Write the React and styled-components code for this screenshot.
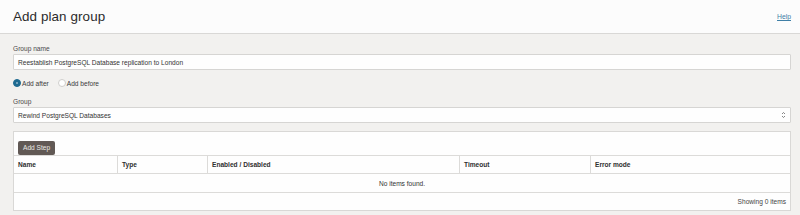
import React from "react";
import styled, { createGlobalStyle } from "styled-components";

const Global = createGlobalStyle`
  html, body { margin: 0; padding: 0; background: #f2f1ef; }
  body { font-family: "Liberation Sans", Arial, sans-serif; color: #333; }
  * { box-sizing: border-box; }
`;

const Page = styled.div`
  width: 800px;
  height: 215px;
  background: #f2f1ef;
  display: flex;
  flex-direction: column;
`;

const Header = styled.header`
  height: 34px;
  background: #fcfcfc;
  border-bottom: 1px solid #d9d8d6;
  display: flex;
  align-items: center;
  justify-content: space-between;
  padding: 0 9px 1px 13px;
`;

const Title = styled.h1`
  margin: 0;
  font-size: 13.4px;
  font-weight: 400;
  color: #2b2b2b;
  letter-spacing: 0.1px;
`;

const HelpLink = styled.a`
  font-size: 6.8px;
  color: #3f7fa6;
  text-decoration: underline;
  margin-top: 1px;
`;

const Body = styled.main`
  padding: 10px 9px 0 13px;
  display: flex;
  flex-direction: column;
`;

const Label = styled.div`
  font-size: 6.6px;
  line-height: 10px;
  color: #4a4a4a;
  margin-top: ${(p) => p.$mt || 0}px;
`;

const Field = styled.div`
  height: 16px;
  background: #fefefe;
  border: 1px solid #d6d5d3;
  border-radius: 1px;
  display: flex;
  align-items: center;
  justify-content: space-between;
  padding: 0 4px 0 4px;
  font-size: 6.6px;
  color: #333;
`;

const RadioRow = styled.div`
  display: flex;
  align-items: center;
  gap: 9px;
  height: 10px;
  margin-top: 8px;
`;

const RadioOption = styled.label`
  display: flex;
  align-items: center;
  gap: 1px;
  font-size: 6.6px;
  color: #3a3a3a;
`;

const RadioDot = styled.span`
  width: 8px;
  height: 8px;
  border-radius: 50%;
  display: inline-flex;
  align-items: center;
  justify-content: center;
  background: ${(p) => (p.$checked ? "#1f6b91" : "#fff")};
  border: 1px solid ${(p) => (p.$checked ? "#1f6b91" : "#cfcecc")};
  &::after {
    content: "";
    width: 2px;
    height: 2px;
    border-radius: 50%;
    background: ${(p) => (p.$checked ? "#8fb6cc" : "transparent")};
  }
`;

const Panel = styled.section`
  margin-top: 8px;
  background: #fefefe;
  border: 1px solid #d9d8d6;
  display: flex;
  flex-direction: column;
`;

const Toolbar = styled.div`
  padding: 4px;
  height: 24px;
  border-bottom: 1px solid #dcdbd9;
`;

const Button = styled.button`
  height: 14px;
  padding: 0 5px;
  background: #615955;
  color: #ece9e6;
  border: none;
  border-radius: 2px;
  font-family: inherit;
  font-size: 6.6px;
`;

const cols = "103px 90px 252px 131px 1fr";

const HeadRow = styled.div`
  display: grid;
  grid-template-columns: ${cols};
  height: 18px;
  border-bottom: 1px solid #dcdbd9;
`;

const HeadCell = styled.div`
  display: flex;
  align-items: center;
  padding-left: 4px;
  font-size: 6.6px;
  font-weight: 700;
  color: #2f2f2f;
  border-left: ${(p) => (p.$first ? "none" : "1px solid #dcdbd9")};
`;

const EmptyRow = styled.div`
  height: 19px;
  display: flex;
  align-items: center;
  justify-content: center;
  font-size: 6.6px;
  color: #333;
  border-bottom: 1px solid #dcdbd9;
`;

const Footer = styled.div`
  height: 17px;
  display: flex;
  align-items: center;
  justify-content: flex-end;
  padding-right: 4px;
  font-size: 6.6px;
  color: #444;
`;

const SelectArrows = () => (
  <svg width="5" height="8" viewBox="0 0 5 8" fill="none" stroke="#666" strokeWidth="0.8">
    <path d="M1 3 L2.5 1.5 L4 3" />
    <path d="M1 5 L2.5 6.5 L4 5" />
  </svg>
);

const headers = ["Name", "Type", "Enabled / Disabled", "Timeout", "Error mode"];

export default function App() {
  return (
    <>
      <Global />
      <Page>
        <Header>
          <Title>Add plan group</Title>
          <HelpLink href="#">Help</HelpLink>
        </Header>
        <Body>
          <Label>Group name</Label>
          <Field>Reestablish PostgreSQL Database replication to London</Field>
          <RadioRow>
            <RadioOption>
              <RadioDot $checked />
              Add after
            </RadioOption>
            <RadioOption>
              <RadioDot />
              Add before
            </RadioOption>
          </RadioRow>
          <Label $mt={9}>Group</Label>
          <Field>
            Rewind PostgreSQL Databases
            <SelectArrows />
          </Field>
          <Panel>
            <Toolbar>
              <Button>Add Step</Button>
            </Toolbar>
            <HeadRow>
              {headers.map((h, i) => (
                <HeadCell key={h} $first={i === 0}>
                  {h}
                </HeadCell>
              ))}
            </HeadRow>
            <EmptyRow>No items found.</EmptyRow>
            <Footer>Showing 0 items</Footer>
          </Panel>
        </Body>
      </Page>
    </>
  );
}
